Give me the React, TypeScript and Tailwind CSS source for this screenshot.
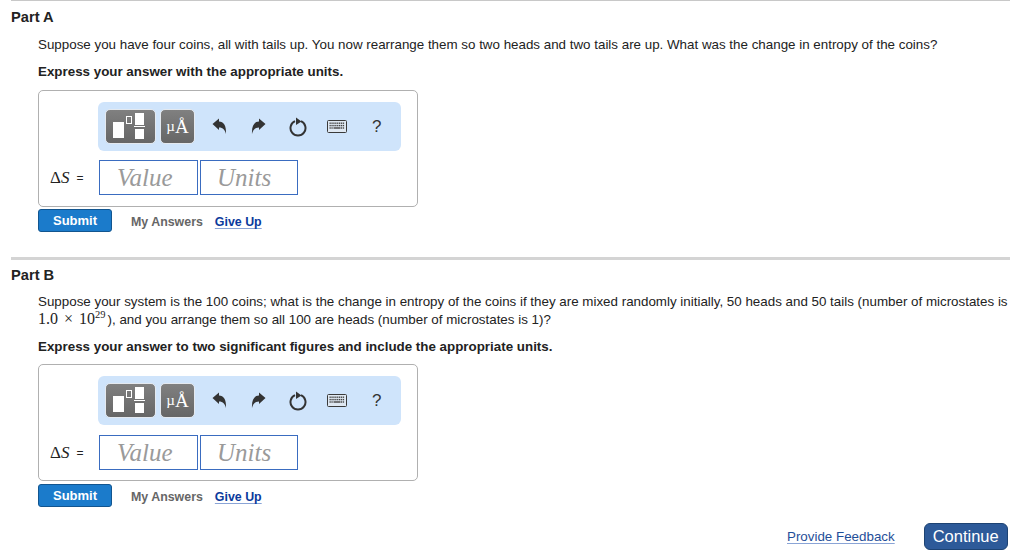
import type { ReactNode } from 'react'

const sans = "font-['Liberation_Sans',Arial,sans-serif]"
const serif = "font-['Liberation_Serif','Times_New_Roman',serif]"

function TemplatesIcon() {
  return (
    <svg width="36" height="28" viewBox="0 0 36 28">
      <rect x="0" y="9" width="11" height="16" fill="#fff" />
      <rect x="13.5" y="3.5" width="5" height="7" fill="none" stroke="#fff" strokeWidth="1" />
      <rect x="22" y="0" width="9" height="12" fill="#fff" />
      <rect x="21" y="13" width="11" height="1" fill="#fff" />
      <rect x="22" y="16" width="9" height="10" fill="#fff" />
    </svg>
  )
}

function Undo({ flip }: { flip?: boolean }) {
  return (
    <svg width="15" height="17" viewBox="0 0 15 17" className={flip ? '-scale-x-100' : ''}>
      <path
        d="M0.5 6 L7 0.5 V3.5 C11.5 3.5 14.5 7.5 14 16 C13 12 11 9.5 7 9.5 V12 Z"
        fill="#333"
      />
    </svg>
  )
}

function Reset() {
  return (
    <svg width="18" height="20" viewBox="0 0 18 20">
      <path d="M12 4.2 A7.5 7.5 0 1 1 6 4.2" fill="none" stroke="#333" strokeWidth="2" />
      <path d="M7 0.5 L12.5 4.5 L7 8 Z" fill="#333" />
    </svg>
  )
}

function Keyboard() {
  const keys = []
  for (let r = 0; r < 3; r++) {
    for (let c = 0; c < 8; c++) {
      if (r === 2 && c > 1 && c < 6) continue
      keys.push(<rect key={r + '-' + c} x={2.5 + c * 1.9} y={2.5 + r * 2.4} width="1.3" height="1.4" fill="#444" />)
    }
  }
  return (
    <svg width="20" height="13" viewBox="0 0 20 13">
      <rect x="0.5" y="0.5" width="19" height="12" rx="1" fill="#dfe8f2" stroke="#3a3a3a" />
      {keys}
      <rect x="6.5" y="7.3" width="7" height="1.4" fill="#444" />
    </svg>
  )
}

function AnswerBox({ rowGap }: { rowGap: string }) {
  return (
    <div className="w-[380px] h-[117px] border border-[#b0b0b0] rounded-[5px] bg-white pt-[11px] pl-[59px]">
      <div className="w-[303px] h-[49px] rounded-[6px] bg-[#cfe4fb] flex items-center pl-[7px]">
        <div className="w-[51px] h-[35px] rounded-[5px] border border-[#e4e9ef] bg-gradient-to-b from-[#808080] to-[#666] flex items-center justify-center">
          <TemplatesIcon />
        </div>
        <div className={`w-[35px] h-[35px] ml-[4px] rounded-[5px] border border-[#e4e9ef] bg-gradient-to-b from-[#808080] to-[#666] flex items-center justify-center text-white ${serif}`}>
          <span className="text-[15px]">µ</span>
          <span className="text-[19px] leading-none">Å</span>
        </div>
        <div className="ml-[16px] w-[17px] flex justify-center">
          <Undo />
        </div>
        <div className="ml-[22px] w-[17px] flex justify-center">
          <Undo flip />
        </div>
        <div className="ml-[22px] w-[18px] flex justify-center">
          <Reset />
        </div>
        <div className="ml-[20px]">
          <Keyboard />
        </div>
        <div className={`ml-[25px] text-[17px] text-[#333] ${sans}`}>?</div>
      </div>
      <div className={`flex items-center ${rowGap} -ml-[48px]`}>
        <div className={`w-[49px] text-[17px] text-[#222] ${serif} flex items-center`}>
          <span>Δ</span>
          <i>S</i>
          <span className={`ml-[7px] text-[12px] ${sans}`}>=</span>
        </div>
        <Field label="Value" w="w-[99px]" pad="pl-[17px]" />
        <div className="w-[2px]" />
        <Field label="Units" w="w-[98px]" pad="pl-[16px]" />
      </div>
    </div>
  )
}

function Field({ label, w, pad }: { label: string; w: string; pad: string }) {
  return (
    <div className={`${w} ${pad} h-[35px] border border-[#3a6cc0] flex items-center text-[25px] italic text-[#9a9a9a] ${serif}`}>
      {label}
    </div>
  )
}

function Actions({ gap }: { gap: string }) {
  return (
    <div className={`flex items-center ${gap} text-[13px] font-bold ${sans}`}>
      <div className="w-[74px] h-[23px] pt-[1px] rounded-[3px] border border-[#12558f] bg-[#1b7bcb] text-white flex items-center justify-center">
        Submit
      </div>
      <span className="ml-[19px] mt-[4px] text-[#666] text-[12.4px]">My Answers</span>
      <span className="ml-[12px] mt-[4px] text-[#0b3a9c] text-[12.4px] underline underline-offset-2 decoration-[#8aa4d6]">Give Up</span>
    </div>
  )
}

function Part({ title, children, note, noteTop, noteGap, rowGap, actionGap }: { title: string; children: ReactNode; note: string; noteTop: string; noteGap: string; rowGap: string; actionGap: string }) {
  return (
    <section className="pl-[11px]">
      <h2 className="text-[14.67px] leading-[17px] font-bold text-[#222]">{title}</h2>
      <div className="pl-[27px]">
        {children}
        <p className={`text-[13.36px] leading-[16px] font-bold text-[#222] ${noteTop} ${noteGap}`}>{note}</p>
        <AnswerBox rowGap={rowGap} />
        <Actions gap={actionGap} />
      </div>
    </section>
  )
}

export default function App() {
  return (
    <div className={`w-[1024px] h-[556px] bg-white overflow-hidden relative ${sans}`}>
      <div className="ml-[11px] w-[999px] h-[1px] bg-[#c8c8c8]" />
      <div className="pt-[8px]">
        <Part title="Part A" note="Express your answer with the appropriate units." noteTop="mt-[11px]" noteGap="mb-[10px]" rowGap="mt-[9px]" actionGap="mt-[2px]">
          <p className="text-[13.36px] leading-[16px] text-[#222] mt-[11px]">
            Suppose you have four coins, all with tails up. You now rearrange them so two heads and two tails are up. What was the change in entropy of the coins?
          </p>
        </Part>
      </div>
      <div className="ml-[11px] w-[999px] h-[3px] bg-[#d4d4d4] mt-[25px]" />
      <div className="pt-[7px]">
        <Part title="Part B" note="Express your answer to two significant figures and include the appropriate units." noteTop="mt-[12px]" noteGap="mb-[9px]" rowGap="mt-[10px]" actionGap="mt-[3px]">
          <div className="text-[13.36px] text-[#222] mt-[10px] whitespace-nowrap">
            <p className="leading-[16px]">
              Suppose your system is the 100 coins; what is the change in entropy of the coins if they are mixed randomly initially, 50 heads and 50 tails (number of microstates is
            </p>
            <p className="flex items-baseline h-[17px] leading-[17px]">
              <span className={`text-[16px] leading-[17px] ${serif}`}>1.0</span>
              <span className={`text-[16px] leading-[17px] mx-[6px] ${serif}`}>×</span>
              <span className={`text-[16px] leading-[17px] ${serif}`}>10</span>
              <span className={`text-[10.5px] leading-[10px] -translate-y-[6px] ${serif}`}>29</span>
              <span className="ml-[2px] whitespace-pre">), and you arrange them so all 100 are heads (number of microstates is 1)?</span>
            </p>
          </div>
        </Part>
      </div>
      <div className="absolute left-[787px] top-[523px] flex items-center">
        <span className="mt-[2px] text-[13.36px] text-[#1f4f99] underline underline-offset-2 decoration-[#8aa4d6]">Provide Feedback</span>
        <div className="ml-[29px] w-[84px] h-[27px] rounded-[6px] border border-[#1d4373] bg-[#2d5a99] text-white text-[16.5px] flex items-center justify-center">
          Continue
        </div>
      </div>
    </div>
  )
}
